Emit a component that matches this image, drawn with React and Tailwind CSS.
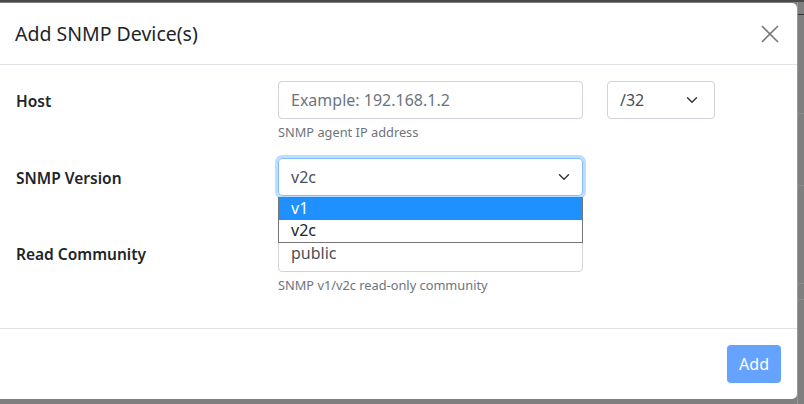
// Add SNMP Device(s) modal, with the version select's native list open.
import React from "react";

const font = { fontFamily: '"Segoe UI", "Noto Sans", "Liberation Sans", sans-serif' };

function Chevron() {
  return (
    <svg width="12" height="12" viewBox="0 0 16 16" className="text-[#343a40]">
      <path d="M2 5l6 6 6-6" fill="none" stroke="currentColor" strokeWidth="2" strokeLinecap="round" strokeLinejoin="round" />
    </svg>
  );
}

function Row({ label, children, help }) {
  return (
    <div className="flex">
      <div className="w-[262px] shrink-0 h-[38px] pt-[3px] flex items-center text-[15.5px] font-semibold text-[#212529]">{label}</div>
      <div className="flex flex-col">
        {children}
        {help && <div className="mt-1 h-[19px] text-[12.8px] leading-[19px] text-[#6c757d]">{help}</div>}
      </div>
    </div>
  );
}

export default function App() {
  return (
    <div className="w-[804px] h-[404px] bg-[#7f7f7f] border-t-2 border-[#4a4a4a] flex overflow-hidden" style={font}>
      <div className="w-[797px] h-[396px] mt-px bg-white rounded-r-[5px] flex flex-col shrink-0">
        <div className="h-[62px] px-4 flex items-center justify-between border-b border-[#dee2e6]">
          <h5 className="text-[19.5px] text-[#212529] leading-[30px] -ml-px">Add SNMP Device(s)</h5>
          <svg width="18" height="18" viewBox="0 0 18 18" className="text-[#767676] mr-0.5">
            <path d="M1 1l16 16M17 1L1 17" stroke="currentColor" strokeWidth="1.6" />
          </svg>
        </div>
        <div className="px-4 pt-4 h-[263px] flex flex-col gap-4">
          <Row label="Host" help="SNMP agent IP address">
            <div className="flex gap-6">
              <div className="w-[305px] h-[38px] border border-[#ced4da] rounded px-3 flex items-center text-[16px] text-[#6c757d]">
                Example: 192.168.1.2
              </div>
              <div className="w-[108px] h-[38px] border border-[#ced4da] rounded pl-3 pr-4 flex items-center justify-between text-[16px] text-[#495057]">
                /32 <Chevron />
              </div>
            </div>
          </Row>
          <Row label="SNMP Version">
            <div className="relative">
              <div className="w-[305px] h-[38px] border border-[#80bdff] rounded px-3 flex items-center justify-between text-[16px] text-[#495057] shadow-[0_0_0_3px_rgba(0,123,255,0.25)]">
                v2c <Chevron />
              </div>
              <div className="absolute left-0 top-[39px] w-[305px] border border-[#767676] bg-white z-10 text-[16px] leading-[21px] text-[#212529]">
                <div className="h-[22px] px-3 bg-[#1e90ff] text-white">v1</div>
                <div className="h-[22px] px-3">v2c</div>
              </div>
            </div>
          </Row>
          <div className="mt-[22px]">
            <Row label="Read Community" help="SNMP v1/v2c read-only community">
              <div className="w-[305px] h-[38px] border border-[#ced4da] rounded px-3 flex items-center text-[16px] text-[#495057]">
                public
              </div>
            </Row>
          </div>
        </div>
        <div className="flex-1 border-t border-[#dee2e6] flex items-center justify-end px-4">
          <button className="h-[38px] px-3 rounded bg-[#66a3ff] text-white text-[16px]">Add</button>
        </div>
      </div>
      <div className="flex-1 flex flex-col border-l border-[#9a9a9a]">
        <div className="h-[12px]" />
        <div className="h-[99px] border-t border-[#333]" />
        <div className="h-[72px] border-t border-[#8c8c8c]" />
        <div className="h-[98px] border-t border-[#8c8c8c]" />
        <div className="h-[16px] border-t border-[#8c8c8c]" />
        <div className="flex-1 border-t border-[#8c8c8c]" />
      </div>
    </div>
  );
}
